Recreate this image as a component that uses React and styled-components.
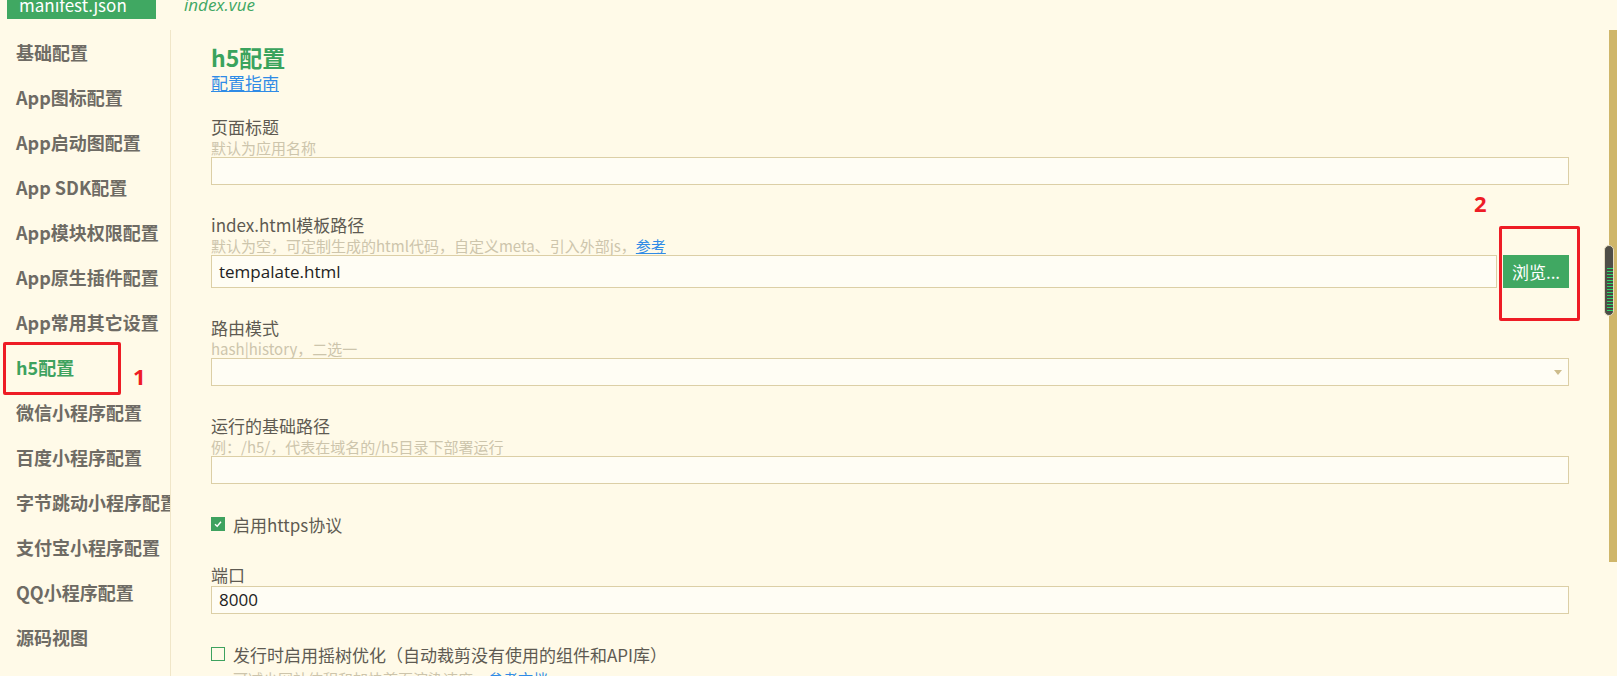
import styled, { createGlobalStyle } from 'styled-components';

const GlobalStyle = createGlobalStyle`
    body {
        margin: 0;
        background: #fffae8;
        font-family: "Noto Sans CJK SC", "Open Sans", sans-serif;
    }
`;

const navItems = [
    '基础配置',
    'App图标配置',
    'App启动图配置',
    'App SDK配置',
    'App模块权限配置',
    'App原生插件配置',
    'App常用其它设置',
    'h5配置',
    '微信小程序配置',
    '百度小程序配置',
    '字节跳动小程序配置',
    '支付宝小程序配置',
    'QQ小程序配置',
    '源码视图',
];

const CheckMark = () => (
    <svg width="10" height="10" viewBox="0 0 10 10">
        <path d="M2 5.2 L4.2 7.2 L8 2.8" fill="none" stroke="#fff" strokeWidth="1.4" />
    </svg>
);

const App = () => {
    return (
        <Page>
            <GlobalStyle />
            <TabBar>
                <Tab>manifest.json</Tab>
                <FileTab>index.vue</FileTab>
            </TabBar>
            <Body>
                <Sidebar>
                    {navItems.map((item) => (
                        <NavItem key={item} $active={item === 'h5配置'}>
                            {item}
                        </NavItem>
                    ))}
                </Sidebar>
                <Content>
                    <Title>h5配置</Title>
                    <GuideLink>配置指南</GuideLink>

                    <Field $first>
                        <Label>页面标题</Label>
                        <Hint>默认为应用名称</Hint>
                        <TextInput />
                    </Field>

                    <Field>
                        <Label>index.html模板路径</Label>
                        <Hint>
                            默认为空，可定制生成的html代码，自定义meta、引入外部js，<HintLink>参考</HintLink>
                        </Hint>
                        <InputRow>
                            <TextInput $tall>tempalate.html</TextInput>
                            <BrowseButton>浏览...</BrowseButton>
                        </InputRow>
                    </Field>

                    <Field>
                        <Label>路由模式</Label>
                        <Hint>hash|history，二选一</Hint>
                        <Select>
                            <Arrow />
                        </Select>
                    </Field>

                    <Field>
                        <Label>运行的基础路径</Label>
                        <Hint>例：/h5/，代表在域名的/h5目录下部署运行</Hint>
                        <TextInput />
                    </Field>

                    <Field>
                        <CheckRow>
                            <Box $checked>
                                <CheckMark />
                            </Box>
                            启用https协议
                        </CheckRow>
                    </Field>

                    <Field>
                        <Label>端口</Label>
                        <TextInput>8000</TextInput>
                    </Field>

                    <Field>
                        <CheckRow>
                            <Box />
                            发行时启用摇树优化（自动裁剪没有使用的组件和API库）
                        </CheckRow>
                        <SubHint>
                            可减少网站体积和加快首页渲染速度，<HintLink>参考文档</HintLink>
                        </SubHint>
                    </Field>
                </Content>
                <ScrollTrack />
            </Body>

            <Thumb />
            <Mark $x={3} $y={342} $w={118} $h={53} />
            <MarkNumber $x={133} $y={361}>1</MarkNumber>
            <Mark $x={1499} $y={226} $w={81} $h={95} />
            <MarkNumber $x={1474} $y={188}>2</MarkNumber>
        </Page>
    );
};

const Page = styled.div`
    position: relative;
    width: 1617px;
    height: 676px;
    overflow: hidden;
`;

const TabBar = styled.div`
    display: flex;
    align-items: flex-start;
    gap: 28px;
    height: 30px;
    padding-left: 7px;
`;

const Tab = styled.div`
    box-sizing: border-box;
    width: 149px;
    height: 19px;
    padding-left: 12px;
    background: #40a862;
    color: #fff;
    font-size: 17px;
    line-height: 10px;
`;

const FileTab = styled.div`
    color: #3ea763;
    font-style: italic;
    font-size: 17px;
    line-height: 10px;
    font-family: "Open Sans", "Noto Sans CJK SC", sans-serif;
`;

const Body = styled.div`
    display: flex;
    height: 646px;
`;

const Sidebar = styled.div`
    width: 170px;
    flex-shrink: 0;
    border-right: 1px solid #f0e6c8;
    overflow: hidden;
`;

const NavItem = styled.div`
    height: 45px;
    line-height: 45px;
    padding-left: 16px;
    white-space: nowrap;
    font-size: 18px;
    font-weight: 700;
    color: ${(p) => (p.$active ? '#3ea25f' : '#6e6b64')};
`;

const Content = styled.div`
    flex: 1;
    padding: 12px 40px 0 40px;
`;

const Title = styled.div`
    font-size: 23px;
    font-weight: 700;
    line-height: 30px;
    color: #3aa35d;
`;

const GuideLink = styled.div`
    font-size: 17px;
    line-height: 22px;
    color: #2f8be6;
    text-decoration: underline;
`;

const Field = styled.div`
    margin-top: ${(p) => (p.$first ? '22px' : '29px')};
`;

const Label = styled.div`
    font-size: 17px;
    line-height: 22px;
    color: #5e5a52;
`;

const Hint = styled.div`
    font-size: 15px;
    line-height: 19px;
    color: #cdc5ac;
    white-space: nowrap;
`;

const HintLink = styled.span`
    color: #2f8be6;
    text-decoration: underline;
`;

const SubHint = styled(Hint)`
    padding-left: 22px;
    margin-top: 4px;
`;

const TextInput = styled.div`
    flex: 1;
    box-sizing: border-box;
    height: ${(p) => (p.$tall ? '33px' : '28px')};
    padding: 0 7px;
    border: 1px solid #dccfa6;
    background: #fffdf4;
    font-size: 17px;
    line-height: ${(p) => (p.$tall ? '31px' : '26px')};
    color: #222;
    font-family: "Open Sans", "Noto Sans CJK SC", sans-serif;
`;

const InputRow = styled.div`
    display: flex;
    gap: 6px;
`;

const BrowseButton = styled.button`
    width: 66px;
    height: 33px;
    border: none;
    padding: 0;
    background: #40a862;
    color: #fff;
    font: inherit;
    font-size: 17px;
`;

const Select = styled.div`
    display: flex;
    align-items: center;
    justify-content: flex-end;
    box-sizing: border-box;
    height: 28px;
    padding-right: 6px;
    border: 1px solid #dccfa6;
    background: #fffdf4;
`;

const Arrow = styled.div`
    width: 0;
    height: 0;
    border-left: 4px solid transparent;
    border-right: 4px solid transparent;
    border-top: 5px solid #cdbc8c;
`;

const CheckRow = styled.div`
    display: flex;
    align-items: center;
    gap: 8px;
    height: 22px;
    font-size: 17px;
    color: #5e5a52;
    white-space: nowrap;
`;

const Box = styled.span`
    display: flex;
    align-items: center;
    justify-content: center;
    box-sizing: border-box;
    width: 14px;
    height: 14px;
    border: 1.5px solid #3ea25f;
    background: ${(p) => (p.$checked ? '#3ea25f' : 'transparent')};
`;

const ScrollTrack = styled.div`
    width: 8px;
    height: 532px;
    flex-shrink: 0;
    background: #cfb66a;
`;

const Thumb = styled.div`
    position: absolute;
    left: 1604px;
    top: 245px;
    box-sizing: border-box;
    width: 10px;
    height: 71px;
    border: 1px solid #e6dcc0;
    border-radius: 5px;
    background:
        repeating-linear-gradient(to bottom, #2bd468 0 1px, #4a4a44 1px 3px) 2px 22px / 6px 44px no-repeat,
        #4f4e47;
`;

const Mark = styled.div`
    position: absolute;
    left: ${(p) => p.$x}px;
    top: ${(p) => p.$y}px;
    width: ${(p) => p.$w}px;
    height: ${(p) => p.$h}px;
    box-sizing: border-box;
    border: 3px solid #ee1c25;
    border-radius: 2px;
`;

const MarkNumber = styled.div`
    position: absolute;
    left: ${(p) => p.$x}px;
    top: ${(p) => p.$y}px;
    font-size: 22px;
    line-height: 30px;
    font-weight: 700;
    color: #ee1c25;
    font-family: "Open Sans", sans-serif;
`;

export default App
